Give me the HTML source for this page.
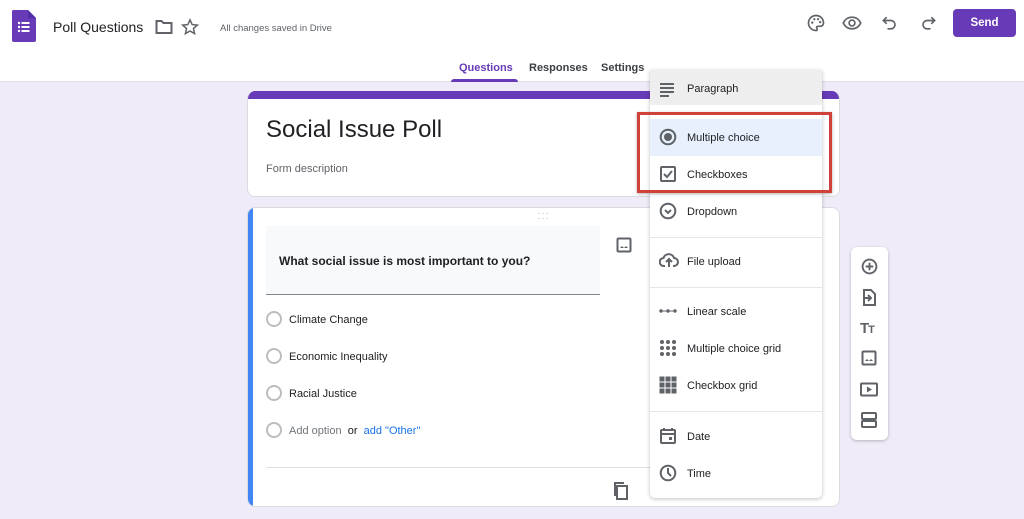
<!DOCTYPE html>
<html><head><meta charset="utf-8"><style>
*{box-sizing:border-box;margin:0;padding:0}
body{width:1024px;height:519px;overflow:hidden;background:#f0ebf8;font-family:"Liberation Sans",Arial,sans-serif;color:#202124;position:relative}
.a{position:absolute}
svg{display:block}
.ic{fill:none;stroke:#5f6368;stroke-width:2}
.mi{position:absolute;left:0;width:172px;height:37px;font-size:11px;color:#202124}
.mi span{position:absolute;left:37px;top:13px}
.mi svg{position:absolute;left:9px;top:9px}
.sep{position:absolute;left:0;width:172px;height:1px;background:#e6e6e6}
</style></head><body>
<div class="a" style="left:0;top:0;width:1024px;height:82px;background:#fff;border-bottom:1px solid #e0e0e0"></div>
<svg class="a" style="left:12px;top:10px" width="24" height="32" viewBox="0 0 24 32"><path d="M1 0h15l8 8v22a2 2 0 0 1-2 2H2a2 2 0 0 1-2-2V1z" fill="#673ab7"/><path d="M16 0v8h8z" fill="#512da8"/><g fill="#fff"><circle cx="7" cy="13" r="1.2"/><circle cx="7" cy="17" r="1.2"/><circle cx="7" cy="21" r="1.2"/><rect x="9.5" y="12" width="8" height="2"/><rect x="9.5" y="16" width="8" height="2"/><rect x="9.5" y="20" width="8" height="2"/></g></svg>
<div class="a" style="left:53px;top:19px;font-size:14px;color:#202124">Poll Questions</div>
<svg class="a" style="left:155px;top:19px" width="18" height="16" viewBox="0 0 18 16"><path class="ic" d="M1.5 2h5l2 2h8v10h-15z" stroke-width="1.6"/></svg>
<svg class="a" style="left:181px;top:18px" width="18" height="18" viewBox="0 0 24 24"><path class="ic" d="M12 2.5l2.9 6.3 6.8.7-5.1 4.6 1.5 6.7L12 17.3l-6.1 3.5 1.5-6.7L2.3 9.5l6.8-.7z" stroke-width="1.8"/></svg>
<div class="a" style="left:220px;top:23px;font-size:9.5px;color:#5f6368">All changes saved in Drive</div>
<svg class="a" style="left:806px;top:13px" width="20" height="20" viewBox="0 0 24 24"><path class="ic" d="M12 3a9 9 0 0 0 0 18c1 0 1.5-.7 1.5-1.5 0-1-.8-1.3-.8-2.2 0-.8.7-1.3 1.5-1.3H17a4 4 0 0 0 4-4C21 6.7 17 3 12 3z" stroke-width="1.8"/><g fill="#5f6368"><circle cx="7.5" cy="11.5" r="1.4"/><circle cx="10" cy="7.5" r="1.4"/><circle cx="14.5" cy="7.5" r="1.4"/><circle cx="17" cy="11" r="1.4"/></g></svg>
<svg class="a" style="left:842px;top:13px" width="20" height="20" viewBox="0 0 24 24"><path class="ic" d="M1.5 12C4 7 8 5 12 5s8 2 10.5 7C20 17 16 19 12 19S4 17 1.5 12z" stroke-width="1.8"/><circle class="ic" cx="12" cy="12" r="3.5" stroke-width="1.8"/></svg>
<svg class="a" style="left:880px;top:13px" width="20" height="20" viewBox="0 0 24 24"><path class="ic" d="M8 5L4 9l4 4M4 9h9a5 5 0 0 1 0 10H9" stroke-width="1.8"/></svg>
<svg class="a" style="left:918px;top:13px" width="20" height="20" viewBox="0 0 24 24"><path class="ic" d="M16 5l4 4-4 4M20 9h-9a5 5 0 0 0 0 10h4" stroke-width="1.8"/></svg>
<div class="a" style="left:953px;top:9px;width:63px;height:28px;background:#673ab7;border-radius:4px;color:#fff;font-size:11.5px;font-weight:bold;text-align:center;line-height:28px">Send</div>
<div class="a" style="left:459px;top:62px;font-size:11px;font-weight:bold;color:#673ab7">Questions</div>
<div class="a" style="left:451px;top:79px;width:67px;height:3px;background:#673ab7;border-radius:3px 3px 0 0"></div>
<div class="a" style="left:529px;top:62px;font-size:11px;font-weight:bold;color:#3c4043">Responses</div>
<div class="a" style="left:601px;top:62px;font-size:11px;font-weight:bold;color:#3c4043">Settings</div>
<div class="a" style="left:247px;top:91px;width:593px;height:106px;background:#fff;border-radius:8px;overflow:hidden;border:1px solid #dadce0;border-top:none">
<div style="height:8px;background:#673ab7"></div></div>
<div class="a" style="left:266px;top:116px;font-size:24px;color:#202124">Social Issue Poll</div>
<div class="a" style="left:266px;top:163px;font-size:11px;color:#5f6368">Form description</div>
<div class="a" style="left:247px;top:207px;width:593px;height:300px;background:#fff;border-radius:8px;overflow:hidden;border:1px solid #dadce0">
<div style="position:absolute;left:0;top:0;width:5px;height:300px;background:#4285f4"></div></div>
<div class="a" style="left:537px;top:211px;font-size:10px;color:#bbb;letter-spacing:1px;line-height:5px">···<br>···</div>
<div class="a" style="left:266px;top:226px;width:334px;height:69px;background:#f8f9fa;border-bottom:1px solid #80868b"></div>
<div class="a" style="left:279px;top:254px;font-size:12px;font-weight:bold;color:#202124">What social issue is most important to you?</div>
<svg class="a" style="left:616px;top:237px" width="16" height="16" viewBox="0 0 16 16"><rect class="ic" x="1.5" y="1.5" width="13" height="13" rx="1" stroke-width="1.6"/><path d="M4 11l2-2 2 2 2-2 2 2z" fill="#5f6368"/></svg>
<div class="a" style="left:266px;top:311px;width:16px;height:16px;border:2px solid #bdbdbd;border-radius:50%"></div>
<div class="a" style="left:289px;top:314px;font-size:11px">Climate Change</div>
<div class="a" style="left:266px;top:348px;width:16px;height:16px;border:2px solid #bdbdbd;border-radius:50%"></div>
<div class="a" style="left:289px;top:351px;font-size:11px">Economic Inequality</div>
<div class="a" style="left:266px;top:385px;width:16px;height:16px;border:2px solid #bdbdbd;border-radius:50%"></div>
<div class="a" style="left:289px;top:388px;font-size:11px">Racial Justice</div>
<div class="a" style="left:266px;top:422px;width:16px;height:16px;border:2px solid #bdbdbd;border-radius:50%"></div>
<div class="a" style="left:289px;top:425px;font-size:11px;color:#70757a">Add option <span style="color:#202124">&nbsp;or&nbsp;</span> <span style="color:#1a73e8">add "Other"</span></div>
<div class="a" style="left:266px;top:467px;width:420px;height:1px;background:#e0e0e0"></div>
<svg class="a" style="left:613px;top:482px" width="16" height="18" viewBox="0 0 16 18"><path class="ic" d="M4 4h10v13H4zM2 14V1h9" stroke-width="1.6"/></svg>
<div class="a" style="left:650px;top:70px;width:172px;height:428px;background:#fff;border-radius:0 0 5px 5px;box-shadow:0 1px 4px rgba(0,0,0,.25);overflow:hidden">
<div class="mi" style="top:0;height:35px;background:#eeeeee"><svg width="16" height="16" style="top:11px" viewBox="0 0 16 16"><path class="ic" d="M1 3h14M1 7h14M1 11h14M1 15h9" stroke-width="1.4"/></svg><span style="top:13px">Paragraph</span></div>
<div class="mi" style="top:49px;background:#e8f0fe"><svg width="18" height="18" viewBox="0 0 18 18"><circle class="ic" cx="9" cy="9" r="7.3" stroke-width="1.6"/><circle cx="9" cy="9" r="4" fill="#5f6368"/></svg><span>Multiple choice</span></div>
<div class="mi" style="top:86px"><svg width="18" height="18" viewBox="0 0 18 18"><rect class="ic" x="2" y="2" width="14" height="14" rx="1" stroke-width="1.6"/><path class="ic" d="M5 9l3 3 5-6" stroke-width="1.4"/></svg><span>Checkboxes</span></div>
<div class="mi" style="top:123px"><svg width="18" height="18" viewBox="0 0 18 18"><circle class="ic" cx="9" cy="9" r="7.3" stroke-width="1.6"/><path class="ic" d="M6 8l3 3 3-3" stroke-width="1.5"/></svg><span>Dropdown</span></div>
<div class="sep" style="top:167px"></div>
<div class="mi" style="top:173px"><svg width="20" height="18" viewBox="0 0 20 18"><path class="ic" d="M6 14H5a4 4 0 0 1-.5-8A5.5 5.5 0 0 1 15 6a3.9 3.9 0 0 1 0 8h-1M7 10l3-3 3 3M10 7v8" stroke-width="1.5"/></svg><span>File upload</span></div>
<div class="sep" style="top:217px"></div>
<div class="mi" style="top:223px"><svg width="18" height="18" viewBox="0 0 18 18"><circle cx="2" cy="9" r="1.7" fill="#5f6368"/><circle cx="9" cy="9" r="1.7" fill="#5f6368"/><circle cx="16" cy="9" r="1.7" fill="#5f6368"/><path d="M2 9h14" stroke="#5f6368"/></svg><span>Linear scale</span></div>
<div class="mi" style="top:260px"><svg width="18" height="18" viewBox="0 0 18 18" fill="#5f6368"><circle cx="3" cy="3" r="2"/><circle cx="9" cy="3" r="2"/><circle cx="15" cy="3" r="2"/><circle cx="3" cy="9" r="2"/><circle cx="9" cy="9" r="2"/><circle cx="15" cy="9" r="2"/><circle cx="3" cy="15" r="2"/><circle cx="9" cy="15" r="2"/><circle cx="15" cy="15" r="2"/></svg><span>Multiple choice grid</span></div>
<div class="mi" style="top:297px"><svg width="18" height="18" viewBox="0 0 18 18" fill="#5f6368"><rect x="0.5" y="0.5" width="5" height="5"/><rect x="6.5" y="0.5" width="5" height="5"/><rect x="12.5" y="0.5" width="5" height="5"/><rect x="0.5" y="6.5" width="5" height="5"/><rect x="6.5" y="6.5" width="5" height="5"/><rect x="12.5" y="6.5" width="5" height="5"/><rect x="0.5" y="12.5" width="5" height="5"/><rect x="6.5" y="12.5" width="5" height="5"/><rect x="12.5" y="12.5" width="5" height="5"/></svg><span>Checkbox grid</span></div>
<div class="sep" style="top:341px"></div>
<div class="mi" style="top:348px"><svg width="18" height="18" viewBox="0 0 18 18"><rect class="ic" x="2" y="3" width="14" height="13" rx="1" stroke-width="1.6"/><path class="ic" d="M2 7h14M5 1v3M13 1v3" stroke-width="1.6"/><rect x="10" y="10" width="3" height="3" fill="#5f6368"/></svg><span>Date</span></div>
<div class="mi" style="top:385px"><svg width="18" height="18" viewBox="0 0 18 18"><circle class="ic" cx="9" cy="9" r="7.3" stroke-width="1.6"/><path class="ic" d="M9 4v5l3 3" stroke-width="1.6"/></svg><span>Time</span></div>
</div>
<div class="a" style="left:637px;top:112px;width:195px;height:81px;border:3px solid #d0413a;box-shadow:0 1px 3px rgba(0,0,0,.3)"></div>
<div class="a" style="left:851px;top:247px;width:37px;height:193px;background:#fff;border-radius:6px;box-shadow:0 1px 3px rgba(0,0,0,.25)"></div>
<svg class="a" style="left:861px;top:258px" width="17" height="17" viewBox="0 0 18 18"><circle class="ic" cx="9" cy="9" r="7.3" stroke-width="1.6"/><path class="ic" d="M9 5v8M5 9h8" stroke-width="1.6"/></svg>
<svg class="a" style="left:862px;top:289px" width="15" height="17" viewBox="0 0 15 17"><path class="ic" d="M2 1h7l4 4v11H2zM2 9h7M6 6l3 3-3 3" stroke-width="1.5"/></svg>
<div class="a" style="left:860px;top:320px;font-size:15px;font-weight:bold;color:#5f6368;letter-spacing:-1px">T<span style="font-size:11px">T</span></div>
<svg class="a" style="left:861px;top:350px" width="16" height="16" viewBox="0 0 16 16"><rect class="ic" x="1.5" y="1.5" width="13" height="13" rx="1" stroke-width="1.6"/><path d="M4 11l2-2 2 2 2-2 2 2z" fill="#5f6368"/></svg>
<svg class="a" style="left:860px;top:382px" width="18" height="15" viewBox="0 0 18 15"><rect class="ic" x="1" y="1.5" width="16" height="12" rx="1" stroke-width="1.6"/><path d="M7 4.5l5 3-5 3z" fill="#5f6368"/></svg>
<svg class="a" style="left:861px;top:412px" width="16" height="16" viewBox="0 0 16 16"><rect class="ic" x="1" y="1" width="14" height="6" rx="1" stroke-width="1.6"/><rect class="ic" x="1" y="9" width="14" height="6" rx="1" stroke-width="1.6"/></svg>
</body></html>
